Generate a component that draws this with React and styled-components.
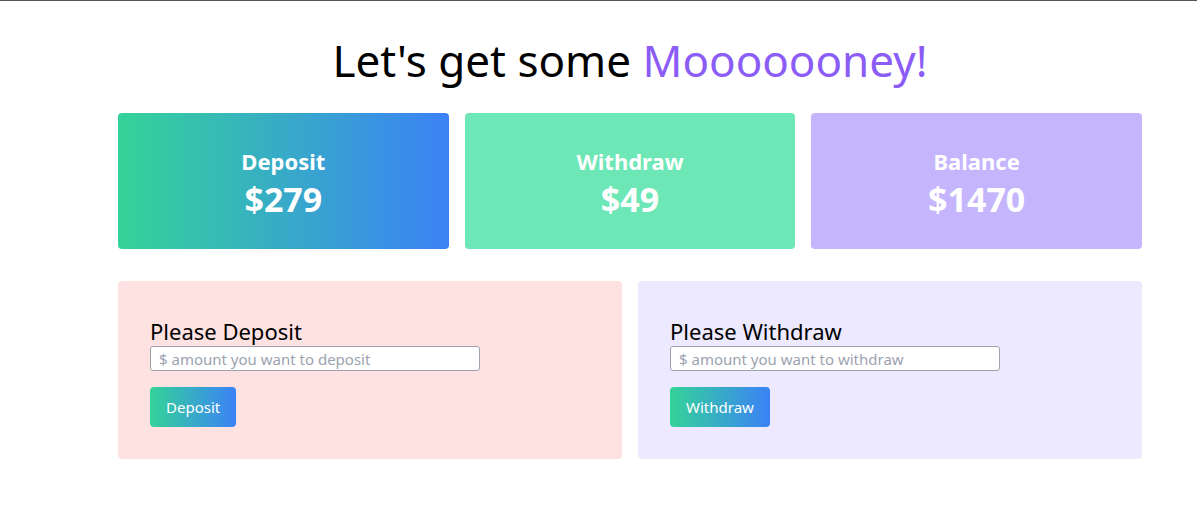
import React, { useState } from "react";
import styled, { createGlobalStyle } from "styled-components";

const GlobalStyle = createGlobalStyle`
  * { box-sizing: border-box; }
  html, body {
    margin: 0;
    padding: 0;
    background: #fff;
    font-family: "Noto Sans", "Open Sans", sans-serif;
    color: #000;
  }
  body { border-top: 1px solid #555; }
`;

const Page = styled.div`
  padding: 30px 0 40px 118px;
`;

const Wrapper = styled.div`
  width: 1024px;
  display: flex;
  flex-direction: column;
`;

const Title = styled.h1`
  margin: 0 0 24px;
  font-size: 44px;
  line-height: 58px;
  font-weight: 400;
  text-align: center;
`;

const Accent = styled.span`
  color: #8b5cf6;
`;

const Stats = styled.div`
  display: grid;
  grid-template-columns: repeat(3, 1fr);
  gap: 16px;
`;

const StatCard = styled.div`
  height: 136px;
  border-radius: 4px;
  background: ${(p) => p.$bg};
  color: #fff;
  display: flex;
  flex-direction: column;
  align-items: center;
  justify-content: center;
  padding-top: 4px;
  font-weight: 700;
`;

const StatLabel = styled.div`
  font-size: 22px;
  line-height: 32px;
`;

const StatValue = styled.div`
  font-size: 34px;
  line-height: 44px;
`;

const Forms = styled.div`
  margin-top: 32px;
  display: grid;
  grid-template-columns: repeat(2, 1fr);
  gap: 16px;
`;

const Panel = styled.form`
  height: 178px;
  border-radius: 4px;
  background: ${(p) => p.$bg};
  padding: 35px 32px 0;
  display: flex;
  flex-direction: column;
  align-items: flex-start;
  & > * { flex-shrink: 0; }
`;

const PanelTitle = styled.label`
  font-size: 22px;
  line-height: 30px;
`;

const AmountInput = styled.input`
  width: 330px;
  height: 25px;
  padding: 0 8px;
  border: 1px solid #9ca3af;
  border-radius: 3px;
  background: #fff;
  font-family: inherit;
  font-size: 15px;
  outline: none;
  &::placeholder { color: #9ca3af; }
`;

const ActionButton = styled.button`
  margin-top: 16px;
  height: 40px;
  padding: 0 16px;
  border: none;
  border-radius: 4px;
  background: linear-gradient(to right, #34d399, #3b82f6);
  color: #fff;
  font-family: inherit;
  font-size: 15px;
  cursor: pointer;
`;

const gradient = "linear-gradient(to right, #34d399, #3b82f6)";

export default function App() {
  const [deposit, setDeposit] = useState(279);
  const [withdraw, setWithdraw] = useState(49);
  const [balance, setBalance] = useState(1470);
  const [depAmount, setDepAmount] = useState("");
  const [wdAmount, setWdAmount] = useState("");

  const handleDeposit = (e) => {
    e.preventDefault();
    const v = parseFloat(depAmount);
    if (!v) return;
    setDeposit(deposit + v);
    setBalance(balance + v);
    setDepAmount("");
  };

  const handleWithdraw = (e) => {
    e.preventDefault();
    const v = parseFloat(wdAmount);
    if (!v) return;
    setWithdraw(withdraw + v);
    setBalance(balance - v);
    setWdAmount("");
  };

  return (
    <>
      <GlobalStyle />
      <Page>
        <Wrapper>
          <Title>
            Let's get some <Accent>Mooooooney!</Accent>
          </Title>
          <Stats>
            <StatCard $bg={gradient}>
              <StatLabel>Deposit</StatLabel>
              <StatValue>${deposit}</StatValue>
            </StatCard>
            <StatCard $bg="#6ee7b7">
              <StatLabel>Withdraw</StatLabel>
              <StatValue>${withdraw}</StatValue>
            </StatCard>
            <StatCard $bg="#c4b5fd">
              <StatLabel>Balance</StatLabel>
              <StatValue>${balance}</StatValue>
            </StatCard>
          </Stats>
          <Forms>
            <Panel $bg="#fee2e2" onSubmit={handleDeposit}>
              <PanelTitle>Please Deposit</PanelTitle>
              <AmountInput
                type="number"
                placeholder="$ amount you want to deposit"
                value={depAmount}
                onChange={(e) => setDepAmount(e.target.value)}
              />
              <ActionButton type="submit">Deposit</ActionButton>
            </Panel>
            <Panel $bg="#ede9fe" onSubmit={handleWithdraw}>
              <PanelTitle>Please Withdraw</PanelTitle>
              <AmountInput
                type="number"
                placeholder="$ amount you want to withdraw"
                value={wdAmount}
                onChange={(e) => setWdAmount(e.target.value)}
              />
              <ActionButton type="submit">Withdraw</ActionButton>
            </Panel>
          </Forms>
        </Wrapper>
      </Page>
    </>
  );
}
